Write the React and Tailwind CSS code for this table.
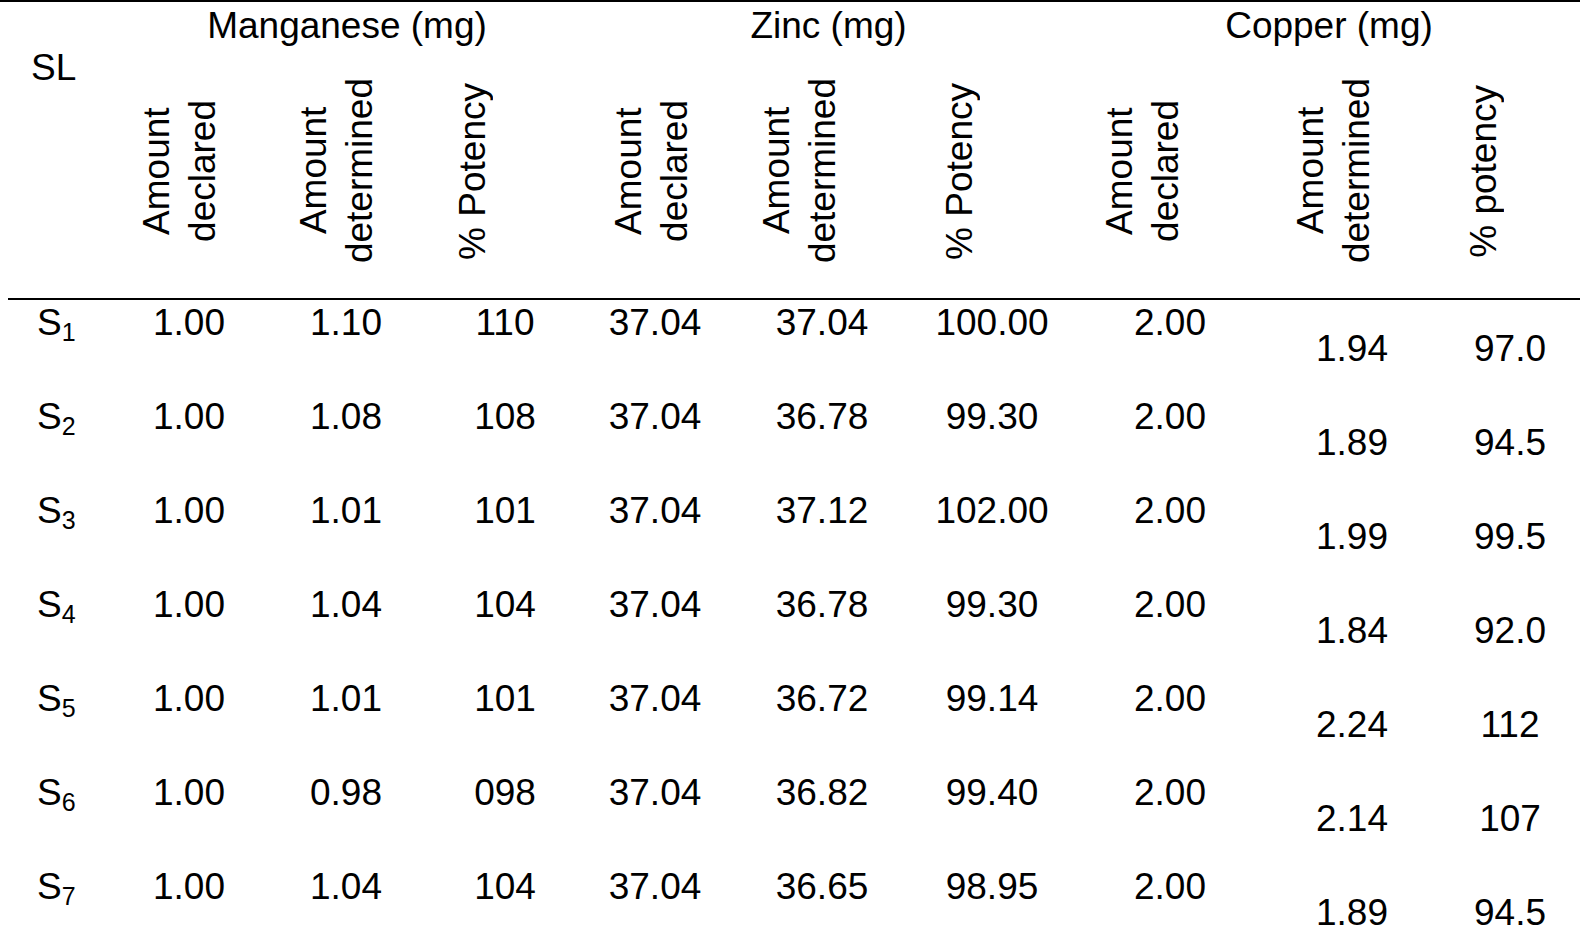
import React from 'react';

const cols = "grid grid-cols-[120px_138px_166px_162px_138px_188px_150px_212px_150px_172px]";

const rows = [
  ["1", "1.00", "1.10", "110", "37.04", "37.04", "100.00", "2.00", "1.94", "97.0"],
  ["2", "1.00", "1.08", "108", "37.04", "36.78", "99.30", "2.00", "1.89", "94.5"],
  ["3", "1.00", "1.01", "101", "37.04", "37.12", "102.00", "2.00", "1.99", "99.5"],
  ["4", "1.00", "1.04", "104", "37.04", "36.78", "99.30", "2.00", "1.84", "92.0"],
  ["5", "1.00", "1.01", "101", "37.04", "36.72", "99.14", "2.00", "2.24", "112"],
  ["6", "1.00", "0.98", "098", "37.04", "36.82", "99.40", "2.00", "2.14", "107"],
  ["7", "1.00", "1.04", "104", "37.04", "36.65", "98.95", "2.00", "1.89", "94.5"],
];

// small per-column nudges so the figures sit where the scan has them
const dataPad = ["", "pl-[10px]", "", "", "pl-[8px]", "pl-[10px]", "pl-[4px]", "pl-[6px]", ""];

const subHeads = [
  { lines: ["Amount", "declared"], cls: "col-start-2 pr-[18px]" },
  { lines: ["Amount", "determined"], cls: "col-start-3 pr-[8px]" },
  { lines: ["% Potency"], cls: "col-start-4 pr-[64px]" },
  { lines: ["Amount", "declared"], cls: "col-start-5 pr-[6px]" },
  { lines: ["Amount", "determined"], cls: "col-start-6 pr-[36px]" },
  { lines: ["% Potency"], cls: "col-start-7 pr-[54px]" },
  { lines: ["Amount", "declared"], cls: "col-start-8 pr-[50px]" },
  { lines: ["Amount", "determined"], cls: "col-start-9 pr-[30px]" },
  { lines: ["% potency"], cls: "col-start-10 pr-[52px]" },
];

function VHead({ lines, cls }) {
  return (
    <div className={`row-start-2 flex items-center justify-center pb-[3px] overflow-hidden ${cls}`}>
      <div className="[writing-mode:vertical-rl] rotate-180 text-center whitespace-nowrap">
        {lines.map((l, i) => (
          <React.Fragment key={i}>
            {i > 0 && <br />}
            {l}
          </React.Fragment>
        ))}
      </div>
    </div>
  );
}

export default function App() {
  return (
    <div className="min-h-screen bg-white text-black font-['Liberation_Sans',Arial,sans-serif] text-[37px] leading-[46px] overflow-hidden">
      <div className="w-[1580px] h-[2px] bg-black" />

      <div className={`${cols} grid-rows-[45px_251px] h-[296px]`}>
        <div className="row-start-1 row-span-2 col-start-1 pl-[31px] pt-[43px]">SL</div>
        <div className="row-start-1 col-start-2 col-span-3 text-center pt-[1px] pr-[12px]">Manganese (mg)</div>
        <div className="row-start-1 col-start-5 col-span-3 text-center pt-[1px] pl-[9px]">Zinc (mg)</div>
        <div className="row-start-1 col-start-8 col-span-3 text-center pt-[1px]">Copper (mg)</div>
        {subHeads.map((h, i) => (
          <VHead key={i} {...h} />
        ))}
      </div>

      <div className="ml-[8px] w-[1572px] h-[2px] bg-black" />

      <div className="flex flex-col">
        {rows.map((r) => (
          <div key={r[0]} className={`${cols} h-[94px] items-start`}>
            <div className="pl-[37px]">
              S<sub className="text-[25px]">{r[0]}</sub>
            </div>
            {r.slice(1).map((v, j) => (
              <div key={j} className={`text-center ${dataPad[j]} ${j >= 7 ? "pt-[26px]" : ""}`}>
                {v}
              </div>
            ))}
          </div>
        ))}
      </div>
    </div>
  );
}
